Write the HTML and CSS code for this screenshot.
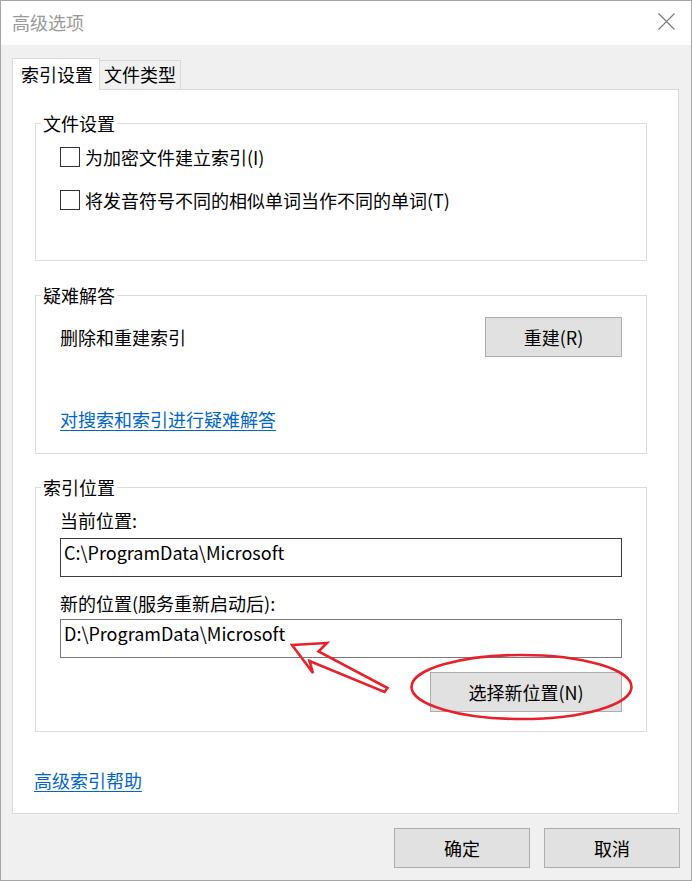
FILE: index.html
```html
<!DOCTYPE html>
<html lang="zh-CN">
<head>
<meta charset="utf-8">
<title>高级选项</title>
<link rel="stylesheet" href="styles.css">
</head>
<body>
<div class="dialog">
  <div class="titlebar">
    <span class="title">高级选项</span>
    <svg class="close" width="17" height="17" viewBox="0 0 17 17"><path d="M0.5 0.5 L16.5 16.5 M16.5 0.5 L0.5 16.5" stroke="#7a7a7a" stroke-width="1.1" fill="none"/></svg>
  </div>
  <div class="body">
    <div class="tabs">
      <div class="tab active">索引设置</div>
      <div class="tab">文件类型</div>
    </div>
    <div class="panel">
      <fieldset class="group g1">
        <legend>文件设置</legend>
        <label class="check"><span class="box"></span>为加密文件建立索引(I)</label>
        <label class="check second"><span class="box"></span>将发音符号不同的相似单词当作不同的单词(T)</label>
      </fieldset>
      <fieldset class="group g2">
        <legend>疑难解答</legend>
        <div class="row">
          <span>删除和重建索引</span>
          <button class="btn rebuild">重建(R)</button>
        </div>
        <a class="link trouble" href="#">对搜索和索引进行疑难解答</a>
      </fieldset>
      <fieldset class="group g3">
        <legend>索引位置</legend>
        <div class="label l1">当前位置:</div>
        <div class="field f1">C:\ProgramData\Microsoft</div>
        <div class="label l2">新的位置(服务重新启动后):</div>
        <div class="field f2">D:\ProgramData\Microsoft</div>
        <div class="row end">
          <button class="btn choose">选择新位置(N)</button>
        </div>
      </fieldset>
      <a class="link help" href="#">高级索引帮助</a>
    </div>
    <div class="footer">
      <button class="btn foot">确定</button>
      <button class="btn foot">取消</button>
    </div>
  </div>
  <svg class="annot" width="692" height="881" viewBox="0 0 692 881">
    <ellipse cx="521.5" cy="687" rx="110" ry="32" fill="none" stroke="#e8202a" stroke-width="2.6"/>
    <path d="M292 645 L327 643 L318.5 651.5 L387.5 688 L384.5 692 L309.5 661 L313 673 Z" fill="none" stroke="#e8202a" stroke-width="2.6" stroke-linejoin="miter"/>
  </svg>
</div>
</body>
</html>
```
FILE: styles.css
```css
* { box-sizing: border-box; }
html, body { margin: 0; padding: 0; background: #ffffff; }
body {
  font-family: "Noto Sans CJK SC", "Noto Sans", sans-serif;
  font-size: 18px;
  line-height: 24px;
  color: #000;
}
.dialog {
  position: relative;
  width: 692px;
  height: 881px;
  border: 1px solid #a6a6a6;
  background: #f0f0f0;
  display: flex;
  flex-direction: column;
}
.titlebar {
  height: 44px;
  background: #fff;
  display: flex;
  align-items: center;
  justify-content: space-between;
  padding: 0 16px 0 11px;
}
.title { color: #9a9a9a; margin-top: -2px; }
.close { margin-top: -3px; margin-right: 0; }
.body {
  flex: 1;
  padding: 12px 11px 0 11px;
  display: flex;
  flex-direction: column;
}
.tabs {
  display: flex;
  align-items: flex-end;
  height: 32px;
  position: relative;
  z-index: 2;
}
.tab {
  border: 1px solid #d9d9d9;
  border-bottom: none;
  background: #f0f0f0;
  height: 29px;
  line-height: 26px;
  padding: 0 4px 0 4px;
  margin-left: -1px;
}
.tab.active {
  background: #fff;
  height: 32px;
  line-height: 31px;
  padding: 0 6px 0 8px;
  margin-left: 0;
  margin-bottom: -1px;
  position: relative;
  z-index: 2;
}
.panel {
  width: 667px;
  height: 725px;
  background: #fff;
  border: 1px solid #d9d9d9;
  padding: 21px 0 0 22px;
  display: flex;
  flex-direction: column;
  align-items: flex-start;
}
.group {
  margin: 0;
  width: 612px;
  border: 1px solid #dcdcdc;
  padding: 0 24px;
  min-width: 0;
}
.group legend {
  padding: 0 2px;
  margin-left: -19px;
  line-height: 24px;
}
.g1 { height: 150px; padding-top: 10px; }
.g2 { height: 171px; padding-top: 10px; margin-top: 22px; }
.g3 { height: 257px; padding-top: 9px; margin-top: 21px; }
.check {
  display: flex;
  align-items: center;
  height: 24px;
}
.check.second { margin-top: 19px; }
.box {
  width: 20px;
  height: 20px;
  border: 1px solid #333;
  background: #fff;
  margin-right: 5px;
  flex: none;
}
.row {
  display: flex;
  align-items: center;
  justify-content: space-between;
}
.row.end { justify-content: flex-end; margin-top: 14px; }
.btn {
  font: inherit;
  color: #000;
  background: #e1e1e1;
  border: 1px solid #adadad;
  height: 40px;
  padding: 0;
  margin: 0;
}
.rebuild { width: 137px; }
.choose { width: 192px; }
.link {
  color: #0066cc;
  text-decoration: underline;
  text-underline-offset: 3px;
}
.trouble { display: block; margin-top: 50px; }
.label { line-height: 24px; }
.l1 { margin-top: 0; }
.field {
  height: 39px;
  border: 1px solid #3c3c3c;
  padding: 0 4px 0 3px;
  line-height: 27px;
  margin-top: 6px;
}
.f2 { border-color: #7a7a7a; }
.l2 { margin-top: 14px; }
.f2 { margin-top: 4px; }
.help { margin-left: -1px; margin-top: 36px; }
.footer {
  display: flex;
  justify-content: flex-end;
  gap: 14px;
  padding: 14px 0 0 0;
}
.foot { width: 136px; height: 40px; }
.annot {
  position: absolute;
  left: -1px;
  top: -1px;
  pointer-events: none;
}
```
